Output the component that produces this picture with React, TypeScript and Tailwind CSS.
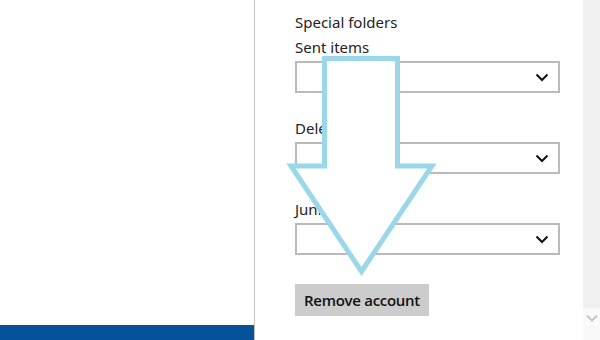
import { ReactNode } from "react";

const font = { fontFamily: '"Noto Sans", "Open Sans", sans-serif' };

function Chevron() {
  return (
    <svg width="14" height="9" viewBox="0 0 14 9" aria-hidden>
      <polyline
        points="1.5,1.5 7,7 12.5,1.5"
        fill="none"
        stroke="#111"
        strokeWidth="2"
      />
    </svg>
  );
}

function FolderSelect({ label, mt }: { label: string; mt: string }) {
  return (
    <div className={mt}>
      <div className="text-[15px] leading-5 text-[#222]">{label}</div>
      <div className="mt-[4px] flex h-[32px] w-[265px] items-center justify-end border-2 border-[#bababa] bg-white pr-[9px]">
        <Chevron />
      </div>
    </div>
  );
}

function Scrollbar({ children }: { children?: ReactNode }) {
  return (
    <div className="flex w-[17px] flex-col">
      <div className="h-[308px] bg-[#f0f0f0]" />
      <div className="flex flex-1 justify-center bg-[#f9f9f9] pt-[6px]">
        <svg width="12" height="9" viewBox="0 0 12 9" aria-hidden>
          <polyline
            points="1,1.5 6,6.5 11,1.5"
            fill="none"
            stroke="#c4c4c4"
            strokeWidth="2"
          />
        </svg>
      </div>
      {children}
    </div>
  );
}

export default function App() {
  return (
    <div
      className="relative flex h-[340px] w-[600px] overflow-hidden bg-white"
      style={font}
    >
      {/* left pane */}
      <div className="flex w-[254px] flex-col justify-end">
        <div className="h-[15px] bg-[#05519a]" />
      </div>
      <div className="w-px bg-[#c3c3c3]" />

      {/* settings pane */}
      <div className="flex-1 pl-[40px] pt-[12px]">
        <div className="text-[15px] leading-5 text-[#222]">Special folders</div>
        <FolderSelect label="Sent items" mt="mt-[5px]" />
        <FolderSelect label="Deleted items" mt="mt-[25px]" />
        <FolderSelect label="Junk email" mt="mt-[25px]" />
        <button
          type="button"
          className="mt-[29px] h-[32px] w-[134px] bg-[#cccccc] font-['Open_Sans',sans-serif] text-[15px] font-semibold leading-5 tracking-[-0.3px] text-[#111]"
        >
          Remove account
        </button>
      </div>

      <Scrollbar />

      {/* annotation arrow */}
      <svg
        className="pointer-events-none absolute left-0 top-0"
        width="600"
        height="340"
        viewBox="0 0 600 340"
        aria-hidden
      >
        <polygon
          points="324.5,58.5 397.5,58.5 397.5,166 432,166 361.5,271.5 291,166 324.5,166"
          fill="#fff"
          stroke="#9ad7e8"
          strokeWidth="5"
          strokeLinejoin="miter"
        />
      </svg>
    </div>
  );
}
